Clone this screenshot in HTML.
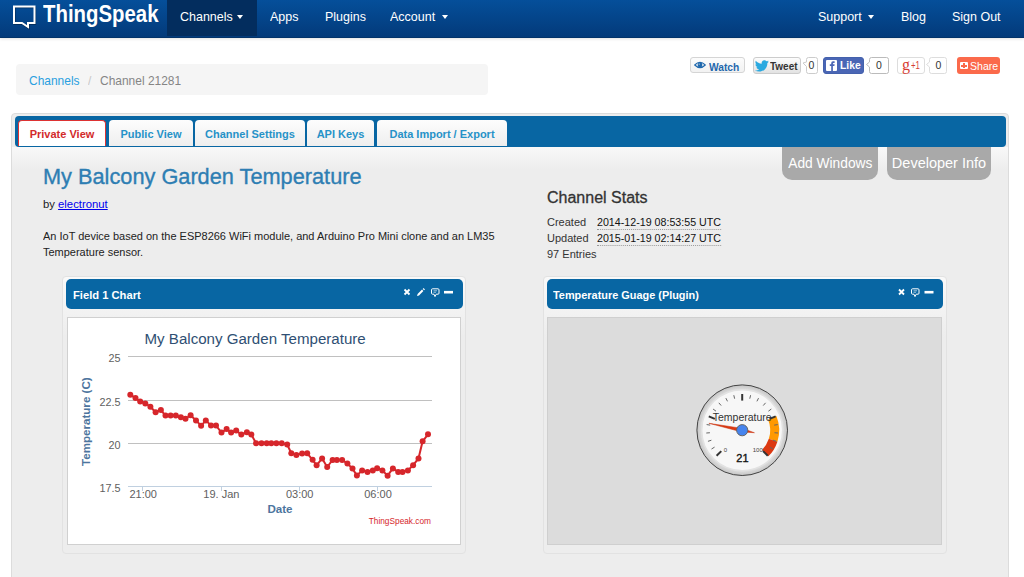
<!DOCTYPE html>
<html><head><meta charset="utf-8">
<style>
*{box-sizing:border-box;}
html,body{margin:0;padding:0;}
body{width:1024px;height:577px;overflow:hidden;position:relative;background:#fff;font-family:"Liberation Sans",sans-serif;}
.a{position:absolute;white-space:nowrap;}
#nav{left:0;top:0;width:1024px;height:38px;background:linear-gradient(#054f9a,#033a7a);border-bottom:1px solid #02336a;box-shadow:0 1px 3px rgba(0,0,0,.12);}
#navact{left:167px;top:0;width:90px;height:36px;background:#032d5e;}
.nl{color:#fff;font-size:13px;line-height:15px;transform-origin:0 0;transform:scaleX(.96);}
.caret{width:0;height:0;border-left:3.5px solid transparent;border-right:3.5px solid transparent;border-top:4px solid #fff;}
#bc{left:16px;top:64px;width:472px;height:31px;background:#f5f5f5;border-radius:4px;}
.bct{font-size:13px;line-height:15px;transform-origin:0 0;transform:scaleX(.92);}
#main{left:11px;top:113px;width:998px;height:480px;background:#ededed;border:1px solid #dcdcdc;border-radius:4px;}
#grad{left:12px;top:147px;width:996px;height:22px;background:linear-gradient(#f8f8f8,#ededed);}
#tabbar{left:15px;top:116px;width:991px;height:31px;background:#0866a3;border-radius:4px;}
.tab{top:120px;height:26px;background:linear-gradient(#fdfdfd,#eeeeee);border-radius:4px 4px 0 0;font-weight:bold;font-size:11px;color:#2692c8;text-align:center;line-height:28px;}
.btn{top:147px;height:32.5px;background:#a9a9a9;border-radius:0 0 10px 10px;color:#fff;font-size:14.5px;text-align:center;line-height:33px;}
.panel{top:276px;height:278px;background:linear-gradient(#f9f9f9,#ededed 60px);border:1px solid #e2e2e2;border-radius:4px;}
.phead{top:279px;height:30px;background:#0866a3;border-radius:5px;}
.ptitle{color:#fff;font-weight:bold;font-size:11.2px;line-height:14px;}
.sb{top:57px;height:17px;border-radius:3px;}
.cnt{top:57px;height:17px;border:1px solid #ccc;background:#fff;border-radius:3px;font-size:11px;line-height:15px;text-align:center;color:#333;}
.cnt:before{content:"";position:absolute;left:-4px;top:4px;width:6px;height:6px;background:#fff;border-left:1px solid #ccc;border-bottom:1px solid #ccc;transform:rotate(45deg);}
</style></head><body>
<div id="nav" class="a"></div>
<div id="navact" class="a"></div>
<svg class="a" style="left:10px;top:3px" width="30" height="28" viewBox="0 0 30 28">
 <path d="M4 3.5 H24.5 V20 H18 L18 24 L12 20 H4 Z" fill="none" stroke="#000" stroke-opacity=".4" stroke-width="2" transform="translate(0.6,0.8)"/>
 <path d="M4 3.5 H24.5 V20 H18 L18 24 L12 20 H4 Z" fill="none" stroke="#fff" stroke-width="2"/>
</svg>
<div class="a" style="left:43px;top:1px;font-size:23px;line-height:26px;font-weight:bold;color:#fff;transform:scaleX(.886);transform-origin:0 0;">ThingSpeak</div>
<div class="a nl" style="left:180px;top:9px;">Channels</div><div class="a caret" style="left:237px;top:15px"></div>
<div class="a nl" style="left:270px;top:9px;">Apps</div>
<div class="a nl" style="left:325px;top:9px;">Plugins</div>
<div class="a nl" style="left:390px;top:9px;">Account</div><div class="a caret" style="left:442px;top:15px"></div>
<div class="a nl" style="left:818px;top:9px;">Support</div><div class="a caret" style="left:868px;top:15px"></div>
<div class="a nl" style="left:901px;top:9px;">Blog</div>
<div class="a nl" style="left:952px;top:9px;">Sign Out</div>

<div id="bc" class="a"></div>
<div class="a bct" style="left:29px;top:73px;color:#2a9fe0">Channels</div>
<div class="a bct" style="left:88px;top:73px;color:#c8c8c8">/</div>
<div class="a bct" style="left:100px;top:73px;color:#858585">Channel 21281</div>

<!-- social -->
<div class="a sb" style="left:690px;width:55px;height:16px;border:1px solid #d5d5d5;background:linear-gradient(#fcfcfc,#f2f2f2);"></div>
<svg class="a" style="left:693.5px;top:61px" width="12" height="8" viewBox="0 0 12 8"><path d="M0.7 4 Q6 -1.2 11.3 4 Q6 9.2 0.7 4 Z" fill="none" stroke="#1f68ad" stroke-width="1.1"/><circle cx="6" cy="4" r="2.4" fill="#1f68ad"/><circle cx="5.2" cy="3.1" r=".7" fill="#fff" opacity=".7"/></svg>
<div class="a" style="left:709px;top:61px;font-size:11px;line-height:13px;font-weight:bold;color:#1f68ad;transform:scaleX(.93);transform-origin:0 0;">Watch</div>

<div class="a sb" style="left:753px;width:48px;border:1px solid #ccc;background:linear-gradient(#fdfdfd,#e2e2e2);"></div>
<svg class="a" style="left:755px;top:60px" width="14" height="12" viewBox="0 0 24 20"><path d="M23.6 2.4c-.9.4-1.8.6-2.8.8 1-.6 1.8-1.5 2.1-2.7-.9.6-2 1-3.1 1.2C18.9.7 17.6.1 16.3.1c-2.7 0-4.9 2.2-4.9 4.9 0 .4 0 .8.1 1.1C7.4 5.9 3.8 4 1.4 1 1 1.7.7 2.6.7 3.5c0 1.7.9 3.2 2.2 4.1-.8 0-1.6-.2-2.2-.6v.1c0 2.4 1.7 4.4 3.9 4.8-.4.1-.8.2-1.3.2-.3 0-.6 0-.9-.1.6 2 2.4 3.4 4.6 3.4-1.7 1.3-3.8 2.1-6.1 2.1-.4 0-.8 0-1.2-.1 2.2 1.4 4.8 2.2 7.5 2.2 9.1 0 14-7.5 14-14v-.6c1-.7 1.8-1.6 2.4-2.5z" fill="#2aa9e0"/></svg>
<div class="a" style="left:770px;top:60px;font-size:10.5px;line-height:12px;font-weight:bold;color:#333;transform:scaleX(.95);transform-origin:0 0;">Tweet</div>
<svg class="a" style="left:800px;top:56px" width="20" height="20" viewBox="800 56 20 20"><path d="M808.5 57.5 H815.5 Q817.5 57.5 817.5 59.5 V71.5 Q817.5 73.5 815.5 73.5 H808.5 Q806.5 73.5 806.5 71.5 V66.5 L803 63 L806.5 62 V59.5 Q806.5 57.5 808.5 57.5 Z" fill="#fff" stroke="#ccc" stroke-width="1"/></svg>
<div class="a" style="left:805.5px;top:59px;width:12px;font-size:10.5px;line-height:12px;text-align:center;color:#333;">0</div>

<div class="a sb" style="left:823px;width:41px;background:#4a66b5;border:1px solid #4461ac;"></div>
<svg class="a" style="left:825px;top:59px" width="13" height="13" viewBox="0 0 13 13"><rect x="1" y="1" width="11" height="11" rx="1" fill="#fff"/><path d="M6.2 12 V7 H4.8 V5.3 H6.2 V4.2 Q6.2 2.3 8 2.3 H9.6 V4 H8.6 Q7.9 4 7.9 4.7 V5.3 H9.6 L9.4 7 H7.9 V12 Z" fill="#4a66b5"/></svg>
<div class="a" style="left:840px;top:60px;font-size:10.3px;line-height:12px;font-weight:bold;color:#fff;">Like</div>
<svg class="a" style="left:864px;top:56px" width="28" height="20" viewBox="864 56 28 20"><path d="M871.5 57.5 H886.5 Q888.5 57.5 888.5 59.5 V71.5 Q888.5 73.5 886.5 73.5 H871.5 Q869.5 73.5 869.5 71.5 V67 L866.5 64.5 L869.5 62 V59.5 Q869.5 57.5 871.5 57.5 Z" fill="#fff" stroke="#bbb" stroke-width="1"/></svg>
<div class="a" style="left:869px;top:59px;width:20px;font-size:10.5px;line-height:12px;text-align:center;color:#333;">0</div>

<div class="a sb" style="left:897px;width:28px;border:1px solid #ddd;background:#fff;"></div>
<div class="a" style="left:902px;top:56.5px;font-family:'Liberation Serif',serif;font-size:16px;line-height:15px;color:#d73d32;">g</div>
<div class="a" style="left:911px;top:59.5px;font-size:10px;line-height:12px;color:#d73d32;transform:scaleX(.78);transform-origin:0 0;">+1</div>
<svg class="a" style="left:924px;top:56px" width="26" height="20" viewBox="924 56 26 20"><path d="M931.5 57.5 H944.5 Q946.5 57.5 946.5 59.5 V71.5 Q946.5 73.5 944.5 73.5 H931.5 Q929.5 73.5 929.5 71.5 V67 L926.5 64.5 L929.5 62 V59.5 Q929.5 57.5 931.5 57.5 Z" fill="#fff" stroke="#ddd" stroke-width="1"/></svg>
<div class="a" style="left:930px;top:59px;width:17px;font-size:10.5px;line-height:12px;text-align:center;color:#333;">0</div>

<div class="a sb" style="left:957px;width:43px;background:#fb6a4b;"></div>
<div class="a" style="left:960px;top:62px;width:8px;height:7px;background:#fff;border-radius:1px;"></div>
<div class="a" style="left:961px;top:65px;width:6px;height:1.5px;background:#fb6a4b;"></div>
<div class="a" style="left:963.25px;top:62.75px;width:1.5px;height:5.5px;background:#fb6a4b;"></div>
<div class="a" style="left:970px;top:59.5px;font-size:11px;line-height:13px;color:#fff;transform:scaleX(.96);transform-origin:0 0;">Share</div>

<div id="main" class="a"></div>
<div id="grad" class="a"></div>
<div id="tabbar" class="a"></div>
<div class="a tab" style="left:18px;width:88px;color:#d22b2b;background:#fff;border:1px solid #d33;border-bottom:none;line-height:26px;">Private View</div>
<div class="a tab" style="left:109px;width:84px;">Public View</div>
<div class="a tab" style="left:195px;width:110px;">Channel Settings</div>
<div class="a tab" style="left:307px;width:67px;">API Keys</div>
<div class="a tab" style="left:377px;width:130px;">Data Import / Export</div>
<div class="a btn" style="left:782px;width:96px;"><span style="display:inline-block;transform:scaleX(.95)">Add Windows</span></div>
<div class="a btn" style="left:887px;width:104px;">Developer Info</div>

<div class="a" style="left:42.5px;top:164px;font-size:22px;line-height:26px;color:#2e7eb3;-webkit-text-stroke:.35px #2e7eb3;transform:scaleX(.988);transform-origin:0 0;">My Balcony Garden Temperature</div>
<div class="a" style="left:43px;top:198px;font-size:11.3px;line-height:13px;color:#222;">by <span style="color:#00e;text-decoration:underline">electronut</span></div>
<div class="a" style="left:43px;top:228px;font-size:11.5px;line-height:16px;color:#222;transform:scaleX(.955);transform-origin:0 0;">An IoT device based on the ESP8266 WiFi module, and Arduino Pro Mini clone and an LM35<br>Temperature sensor.</div>

<div class="a" style="left:547px;top:189px;font-size:16px;line-height:18px;color:#333;-webkit-text-stroke:.3px #333;">Channel Stats</div>
<div class="a" style="left:547px;top:215px;font-size:11px;line-height:15px;color:#333;">Created</div>
<div class="a" style="left:597px;top:215px;font-size:11px;line-height:14px;color:#111;border-bottom:1px dotted #999;transform:scaleX(.97);transform-origin:0 0;">2014-12-19 08:53:55 UTC</div>
<div class="a" style="left:547px;top:231px;font-size:11px;line-height:15px;color:#333;">Updated</div>
<div class="a" style="left:597px;top:231px;font-size:11px;line-height:14px;color:#111;border-bottom:1px dotted #999;transform:scaleX(.97);transform-origin:0 0;">2015-01-19 02:14:27 UTC</div>
<div class="a" style="left:547px;top:247px;font-size:11px;line-height:15px;color:#333;">97 Entries</div>

<div class="a panel" style="left:62px;width:404px;"></div>
<div class="a phead" style="left:66px;width:397px;"></div>
<div class="a ptitle" style="left:73px;top:288px;">Field 1 Chart</div>
<div class="a" style="left:67px;top:317px;width:394px;height:228px;background:#fff;border:1px solid #d0d0d0;"></div>
<svg class="a" style="left:400px;top:286px" width="60" height="14" viewBox="400 286 60 14">
 <path d="M404.5 289.5 L409.5 294.5 M409.5 289.5 L404.5 294.5" stroke="#fff" stroke-width="1.8"/>
 <path d="M417 296 L417.6 294 L422 289.6 L423.4 291 L419 295.4 Z" fill="#fff"/><path d="M422.7 288.9 L423.6 288 L425 289.4 L424.1 290.3 Z" fill="#fff"/>
 <path d="M432.5 288.8 H438 Q439 288.8 439 289.8 V293.2 Q439 294.2 438 294.2 H436.2 L435 296.6 L434 294.2 H432.5 Q431.5 294.2 431.5 293.2 V289.8 Q431.5 288.8 432.5 288.8 Z" fill="none" stroke="#fff" stroke-width="1"/><path d="M433.5 290.8 H437 M433.5 292.3 H436" stroke="#fff" stroke-width=".6"/>
 <path d="M444 292.2 H453" stroke="#fff" stroke-width="2.6"/>
</svg>
<svg class="a" style="left:67px;top:317px" width="394" height="228" viewBox="67 317 394 228" font-family="Liberation Sans, sans-serif">
 <text x="144.5" y="344.2" font-size="15.1" fill="#2f4f73">My Balcony Garden Temperature</text>
 <g stroke="#c0c0c0" stroke-width="1">
  <line x1="128" y1="356.5" x2="432" y2="356.5"/>
  <line x1="128" y1="400.5" x2="432" y2="400.5"/>
  <line x1="128" y1="443.5" x2="432" y2="443.5"/>
 </g>
 <line x1="128" y1="486.5" x2="432" y2="486.5" stroke="#c0d0e0" stroke-width="1"/>
 <g stroke="#c0d0e0" stroke-width="1">
  <line x1="142.5" y1="486" x2="142.5" y2="491"/>
  <line x1="221.5" y1="486" x2="221.5" y2="491"/>
  <line x1="299.5" y1="486" x2="299.5" y2="491"/>
  <line x1="377.5" y1="486" x2="377.5" y2="491"/>
 </g>
 <g font-size="10.8" fill="#606060" text-anchor="end">
  <text x="120.5" y="362">25</text>
  <text x="120.5" y="406">22.5</text>
  <text x="120.5" y="449">20</text>
  <text x="120.5" y="492">17.5</text>
 </g>
 <g font-size="11" fill="#606060" text-anchor="middle">
  <text x="143.2" y="498">21:00</text>
  <text x="221.4" y="498">19. Jan</text>
  <text x="299.7" y="498">03:00</text>
  <text x="378" y="498">06:00</text>
 </g>
 <text x="280" y="512.8" font-size="11.6" font-weight="bold" fill="#4d759e" text-anchor="middle">Date</text>
 <text transform="translate(90.3 421.7) rotate(-90)" font-size="11.6" font-weight="bold" fill="#4d759e" text-anchor="middle">Temperature (C)</text>
 <text x="431" y="523.7" font-size="8.3" fill="#d6262b" text-anchor="end">ThingSpeak.com</text>
 <path d="M130.3 394.7 L135.5 398.1 L140.2 401.6 L145.3 403.5 L150.4 406.7 L155.6 412.2 L160.9 410.1 L165.5 415.6 L170.6 415.6 L175.8 415.6 L180.9 417.3 L185.5 418.8 L190.6 415.3 L196.0 420.4 L201.1 425.8 L205.8 420.4 L211.0 425.5 L216.0 425.5 L221.5 432.6 L226.6 429.1 L231.1 432.5 L236.2 430.6 L241.3 434.5 L246.9 432.2 L251.3 434.5 L256.1 443.2 L261.5 443.2 L266.7 443.2 L271.3 443.2 L276.4 443.2 L281.7 443.2 L287.2 444.5 L291.3 453.2 L296.4 455.1 L302.1 453.4 L307.2 453.3 L312.6 459.8 L316.6 465.3 L322.1 458.4 L327.2 467.0 L332.6 459.9 L336.9 459.9 L342.1 459.9 L347.4 463.5 L352.5 468.6 L356.9 475.5 L362.1 470.4 L367.5 472.1 L372.8 470.4 L377.1 468.3 L382.4 470.4 L387.6 475.7 L392.9 468.4 L398.2 472.0 L402.5 472.0 L407.9 470.4 L413.1 465.2 L418.5 458.5 L422.6 441.3 L428.0 434.3" fill="none" stroke="#d6262b" stroke-width="2" stroke-linejoin="round"/>
 <g fill="#d6262b"><circle cx="130.3" cy="394.7" r="3"/><circle cx="135.5" cy="398.1" r="3"/><circle cx="140.2" cy="401.6" r="3"/><circle cx="145.3" cy="403.5" r="3"/><circle cx="150.4" cy="406.7" r="3"/><circle cx="155.6" cy="412.2" r="3"/><circle cx="160.9" cy="410.1" r="3"/><circle cx="165.5" cy="415.6" r="3"/><circle cx="170.6" cy="415.6" r="3"/><circle cx="175.8" cy="415.6" r="3"/><circle cx="180.9" cy="417.3" r="3"/><circle cx="185.5" cy="418.8" r="3"/><circle cx="190.6" cy="415.3" r="3"/><circle cx="196.0" cy="420.4" r="3"/><circle cx="201.1" cy="425.8" r="3"/><circle cx="205.8" cy="420.4" r="3"/><circle cx="211.0" cy="425.5" r="3"/><circle cx="216.0" cy="425.5" r="3"/><circle cx="221.5" cy="432.6" r="3"/><circle cx="226.6" cy="429.1" r="3"/><circle cx="231.1" cy="432.5" r="3"/><circle cx="236.2" cy="430.6" r="3"/><circle cx="241.3" cy="434.5" r="3"/><circle cx="246.9" cy="432.2" r="3"/><circle cx="251.3" cy="434.5" r="3"/><circle cx="256.1" cy="443.2" r="3"/><circle cx="261.5" cy="443.2" r="3"/><circle cx="266.7" cy="443.2" r="3"/><circle cx="271.3" cy="443.2" r="3"/><circle cx="276.4" cy="443.2" r="3"/><circle cx="281.7" cy="443.2" r="3"/><circle cx="287.2" cy="444.5" r="3"/><circle cx="291.3" cy="453.2" r="3"/><circle cx="296.4" cy="455.1" r="3"/><circle cx="302.1" cy="453.4" r="3"/><circle cx="307.2" cy="453.3" r="3"/><circle cx="312.6" cy="459.8" r="3"/><circle cx="316.6" cy="465.3" r="3"/><circle cx="322.1" cy="458.4" r="3"/><circle cx="327.2" cy="467.0" r="3"/><circle cx="332.6" cy="459.9" r="3"/><circle cx="336.9" cy="459.9" r="3"/><circle cx="342.1" cy="459.9" r="3"/><circle cx="347.4" cy="463.5" r="3"/><circle cx="352.5" cy="468.6" r="3"/><circle cx="356.9" cy="475.5" r="3"/><circle cx="362.1" cy="470.4" r="3"/><circle cx="367.5" cy="472.1" r="3"/><circle cx="372.8" cy="470.4" r="3"/><circle cx="377.1" cy="468.3" r="3"/><circle cx="382.4" cy="470.4" r="3"/><circle cx="387.6" cy="475.7" r="3"/><circle cx="392.9" cy="468.4" r="3"/><circle cx="398.2" cy="472.0" r="3"/><circle cx="402.5" cy="472.0" r="3"/><circle cx="407.9" cy="470.4" r="3"/><circle cx="413.1" cy="465.2" r="3"/><circle cx="418.5" cy="458.5" r="3"/><circle cx="422.6" cy="441.3" r="3"/><circle cx="428.0" cy="434.3" r="3"/></g>
</svg>

<div class="a panel" style="left:543px;width:404px;"></div>
<div class="a phead" style="left:547px;width:396px;"></div>
<div class="a ptitle" style="left:553px;top:288px;transform:scaleX(.975);transform-origin:0 0;">Temperature Guage (Plugin)</div>
<svg class="a" style="left:890px;top:286px" width="50" height="14" viewBox="890 286 50 14">
 <path d="M899 289.5 L904 294.5 M904 289.5 L899 294.5" stroke="#fff" stroke-width="1.8"/>
 <path d="M912.5 288.8 H918 Q919 288.8 919 289.8 V293.2 Q919 294.2 918 294.2 H916.2 L915 296.6 L914 294.2 H912.5 Q911.5 294.2 911.5 293.2 V289.8 Q911.5 288.8 912.5 288.8 Z" fill="none" stroke="#fff" stroke-width="1"/><path d="M913.5 290.8 H917 M913.5 292.3 H916" stroke="#fff" stroke-width=".6"/>
 <path d="M924.5 292.2 H933.5" stroke="#fff" stroke-width="2.6"/>
</svg>
<div class="a" style="left:547px;top:317px;width:395px;height:228px;background:#dcdcdc;border:1px solid #cfcfcf;"></div>
<svg class="a" style="left:690px;top:378px" width="106" height="104" viewBox="690 378 106 104" font-family="Liberation Sans, sans-serif">
 <defs><radialGradient id="gring" cx="50%" cy="50%" r="50%"><stop offset="85%" stop-color="#e8e8e8"/><stop offset="100%" stop-color="#c4c4c4"/></radialGradient></defs>
<circle cx="742.2" cy="430.2" r="45.3" fill="url(#gring)" stroke="#444" stroke-width="1"/>
<circle cx="742.2" cy="430.2" r="40.5" fill="#f7f7f7" stroke="#e2e2e2" stroke-width="1.5"/>
<path d="M776.38 416.04 A37 37 0 0 1 777.39 441.63 L768.83 438.85 A28 28 0 0 0 768.07 419.48 Z" fill="#ff9900"/>
<path d="M777.39 441.63 A37 37 0 0 1 768.36 456.36 L762.00 450.00 A28 28 0 0 0 768.83 438.85 Z" fill="#dc3912"/>
<line x1="721.27" y1="451.13" x2="716.60" y2="455.80" stroke="#333" stroke-width="2"/>
<line x1="714.57" y1="447.13" x2="711.50" y2="449.01" stroke="#666" stroke-width="1"/>
<line x1="711.39" y1="440.21" x2="707.96" y2="441.32" stroke="#666" stroke-width="1"/>
<line x1="709.90" y1="432.74" x2="706.31" y2="433.02" stroke="#666" stroke-width="1"/>
<line x1="710.20" y1="425.13" x2="706.64" y2="424.57" stroke="#666" stroke-width="1"/>
<line x1="714.85" y1="418.87" x2="708.76" y2="416.35" stroke="#333" stroke-width="2"/>
<line x1="715.99" y1="411.16" x2="713.08" y2="409.04" stroke="#666" stroke-width="1"/>
<line x1="721.16" y1="405.56" x2="718.82" y2="402.83" stroke="#666" stroke-width="1"/>
<line x1="727.49" y1="401.33" x2="725.86" y2="398.12" stroke="#666" stroke-width="1"/>
<line x1="734.64" y1="398.70" x2="733.80" y2="395.19" stroke="#666" stroke-width="1"/>
<line x1="742.20" y1="400.60" x2="742.20" y2="394.00" stroke="#333" stroke-width="2"/>
<line x1="749.76" y1="398.70" x2="750.60" y2="395.19" stroke="#666" stroke-width="1"/>
<line x1="756.91" y1="401.33" x2="758.54" y2="398.12" stroke="#666" stroke-width="1"/>
<line x1="763.24" y1="405.56" x2="765.58" y2="402.83" stroke="#666" stroke-width="1"/>
<line x1="768.41" y1="411.16" x2="771.32" y2="409.04" stroke="#666" stroke-width="1"/>
<line x1="769.55" y1="418.87" x2="775.64" y2="416.35" stroke="#333" stroke-width="2"/>
<line x1="774.20" y1="425.13" x2="777.76" y2="424.57" stroke="#666" stroke-width="1"/>
<line x1="774.50" y1="432.74" x2="778.09" y2="433.02" stroke="#666" stroke-width="1"/>
<line x1="773.01" y1="440.21" x2="776.44" y2="441.32" stroke="#666" stroke-width="1"/>
<line x1="769.83" y1="447.13" x2="772.90" y2="449.01" stroke="#666" stroke-width="1"/>
<line x1="763.13" y1="451.13" x2="767.80" y2="455.80" stroke="#333" stroke-width="2"/>
<text x="742.2" y="420.6" text-anchor="middle" font-size="10.5" fill="#333">Temperature</text>
<text x="725.5" y="451.8" text-anchor="middle" font-size="6" fill="#444">0</text>
<text x="757.8" y="451.8" text-anchor="middle" font-size="6" fill="#444">100</text>
<text x="742.4000000000001" y="462.3" text-anchor="middle" font-size="11" fill="#111" stroke="#111" stroke-width=".35">21</text>
<path d="M708.91 423.31 L742.57 428.44 L754.44 432.73 L741.83 431.96 Z" fill="#dc3912" stroke="#c63310" stroke-width=".5"/>
<circle cx="742.2" cy="430.2" r="5.6" fill="#4684ee" stroke="#666" stroke-width="1"/>
</svg>
</body></html>
